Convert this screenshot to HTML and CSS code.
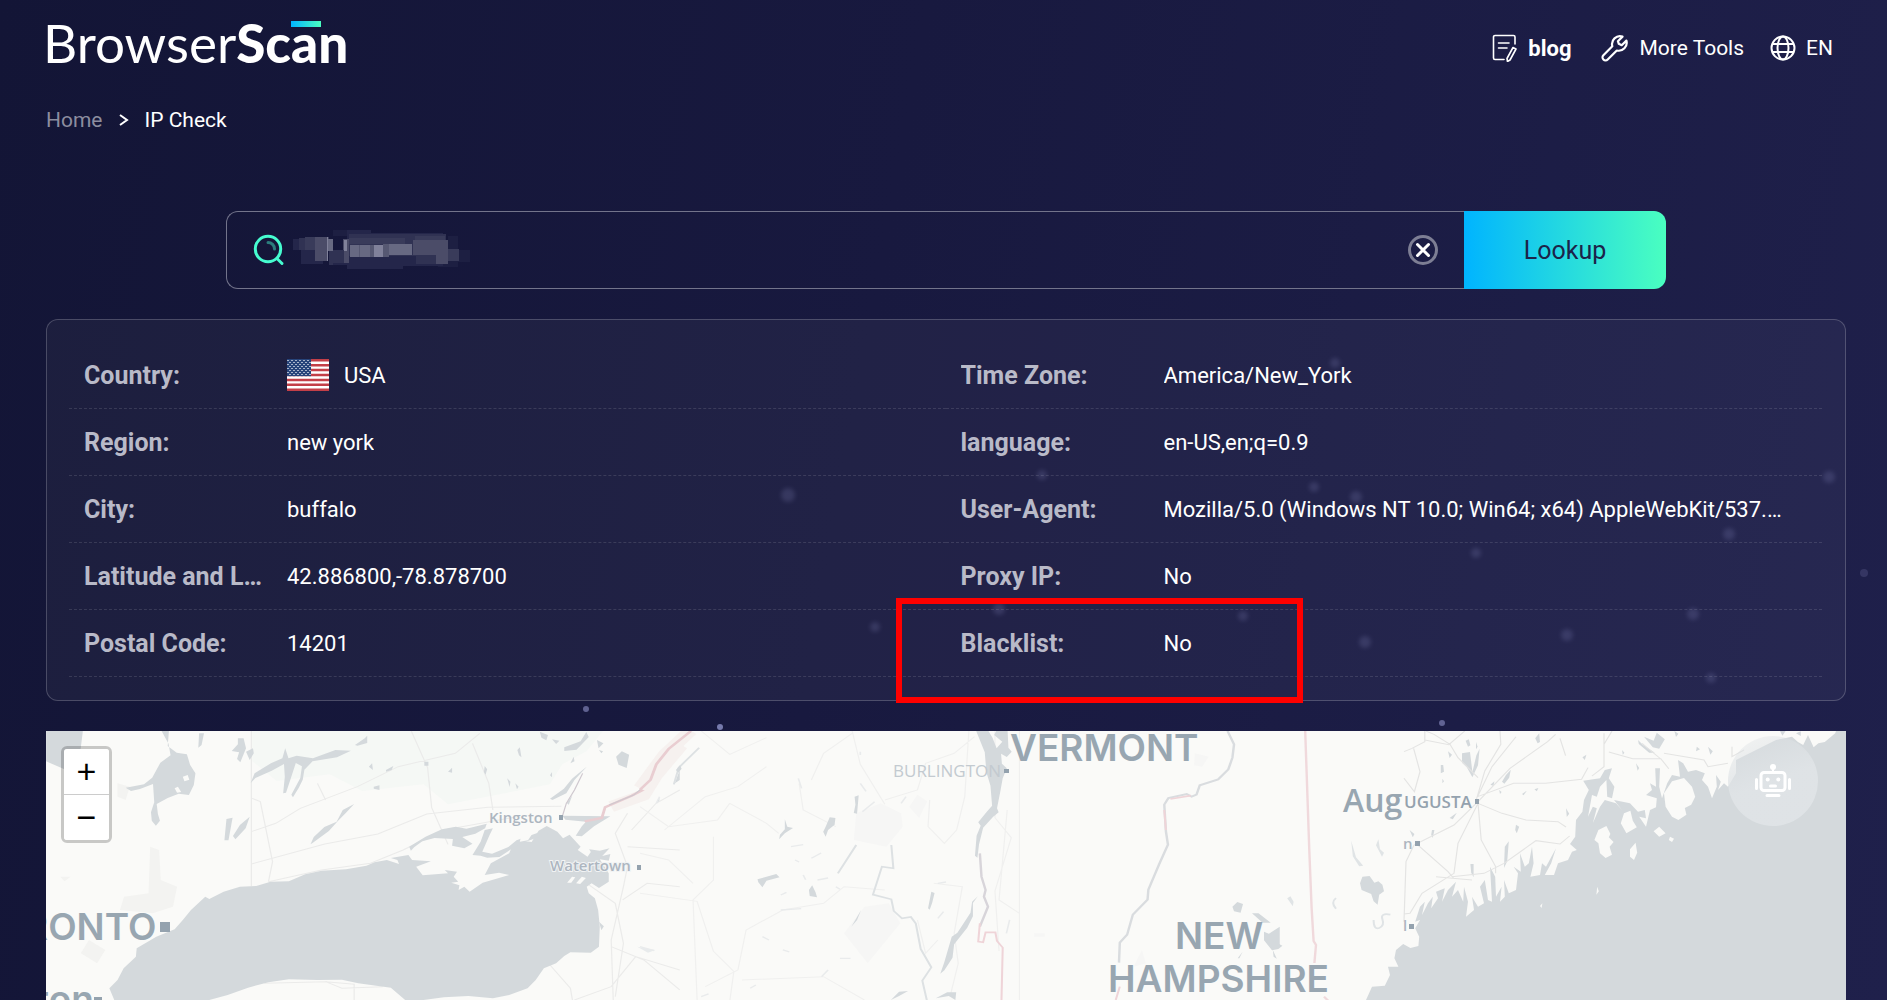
FILE: index.html
```
<!DOCTYPE html>
<html lang="en">

<head>
    <meta charset="UTF-8">
    <meta name="viewport" content="width=device-width, initial-scale=1.0">
    <title>IP Check - BrowserScan</title>
    <link rel="stylesheet" href="styles.css">
</head>

<body>
    <!-- background particles -->
    <svg class="particles" aria-hidden="true">
        <g fill="#8f92c8">
            <circle cx="586" cy="709" r="3" opacity=".6" />
            <circle cx="720" cy="727" r="3" opacity=".8" />
            <circle cx="1442" cy="723" r="3" opacity=".6" />
            <circle cx="1864" cy="573" r="4" opacity=".2" />
        </g>
        <g class="dim" fill="#8f92c8" opacity=".2">
            <circle cx="788" cy="495" r="7" />
            <circle cx="1335" cy="363" r="5" />
            <circle cx="1042" cy="475" r="5" />
            <circle cx="1314" cy="487" r="5" />
            <circle cx="1356" cy="497" r="6" />
            <circle cx="1729" cy="534" r="6" />
            <circle cx="1476" cy="553" r="5" />
            <circle cx="1829" cy="477" r="6" />
            <circle cx="875" cy="627" r="5" />
            <circle cx="999" cy="609" r="6" />
            <circle cx="1243" cy="616" r="5" />
            <circle cx="1365" cy="642" r="6" />
            <circle cx="1567" cy="635" r="6" />
            <circle cx="1693" cy="614" r="6" />
            <circle cx="1711" cy="678" r="5" />
        </g>
    </svg>

    <header class="header">
        <a class="logo" href="#">Browser<b>Sc<span class="logo-a">a</span>n</b></a>
        <nav class="nav">
            <a class="nav-item nav-blog" href="#">
                <svg width="26" height="28" viewBox="0 0 26 28" fill="none" stroke="#fff" stroke-width="1.6" stroke-linecap="round" stroke-linejoin="round">
                    <path d="M23 10V3a1.500 1.500 0 0 0-1.500-1.500H3A1.500 1.500 0 0 0 1.500 3v21A1.500 1.500 0 0 0 3 25.500h9M6.500 9H17M6.500 14H15" />
                    <path d="M21 13.500l3 1.500-6 11-2.500 1.500-.5-3z" />
                </svg>
                <b>blog</b>
            </a>
            <a class="nav-item nav-tools" href="#">
                <svg width="28" height="28" viewBox="0 0 28 28" fill="none" stroke="#fff" stroke-width="2.200" stroke-linejoin="round">
                    <path d="M21.500 2.600A8 8 0 0 0 11.300 12.300L2.400 21.200a3 3 0 0 0 4.300 4.300L15.800 16.500A8 8 0 0 0 25.400 6.600L20.700 11.200 17.800 9.800 16.900 7.200z" />
                </svg>
                <span>More Tools</span>
            </a>
            <a class="nav-item" href="#">
                <svg width="26" height="26" viewBox="0 0 26 26" fill="none" stroke="#fff" stroke-width="2">
                    <circle cx="13" cy="13" r="11.500" />
                    <ellipse cx="13" cy="13" rx="5.500" ry="11.500" />
                    <path d="M2.500 9h21M2.500 17h21" />
                </svg>
                <span>EN</span>
            </a>
        </nav>
    </header>

    <main class="main">
        <nav class="crumbs">
            <a href="#">Home</a>
            <svg width="10" height="12" viewBox="0 0 10 12" fill="none" stroke="#fff" stroke-width="2"><path d="M1 1l7 5-7 5" /></svg>
            <span>IP Check</span>
        </nav>

        <form class="search">
            <div class="search-field">
                <svg width="32" height="32" viewBox="0 0 32 32" fill="none" stroke="#46fcd0" stroke-width="3" stroke-linecap="round">
                    <circle cx="15" cy="15" r="12.700" />
                    <path d="M24.500 25l4.500 4.500" />
                    <path d="M15 8.500a6.500 6.500 0 0 1 6.500 6.500" opacity=".45" />
                </svg>
                <!-- hidden address -->
                <svg class="mask" width="180" height="40" viewBox="0 0 180 40" shape-rendering="crispEdges" aria-hidden="true">
                    <path fill="#1d1f42" d="M40 0h16v6H40zM155 6h10v14h12v12h-12v5h-20v-6h10z" />
                    <path fill="#24264a" d="M0 9h30v25H8V20H0zM54 0h24v3h72v33h-40v3H54v-4H38V20h16z" />
                    <path fill="#303253" d="M6 8h16v12H6zM36 20h20v13H40v2h-4zM56 4h97v30h-30v-8H56z" />
                    <path fill="#393b5a" d="M12 7h24v13H12zM56 8h56v6H56zM122 6h30v14h-30zM166 19h-14v12h14z" />
                    <path fill="#4b4c68" d="M22 7h13v24H22zM50 9h6v24h-5V20h-1zM120 10h35v15h-35zM143 20h12v14h-12z" />
                    <path fill="#676982" d="M57 15h20v12H57zM96 14h23v11H96zM35 9h5v12h-5z" />
                    <path fill="#80819a" d="M81 15h9v12h-9zM34 7h1v24h-1zM51 10h3v11h-3z" />
                    <path fill="#565872" d="M77 15h4v12h-4zM90 14h6v13h-6zM66 15h1v12h-1z" />
                </svg>
                <input class="search-input" type="text" aria-label="IP address">
                <button class="clear" type="reset" aria-label="Clear">
                    <svg width="30" height="30" viewBox="0 0 30 30" fill="none">
                        <circle cx="15" cy="15" r="13.500" stroke="#7d7e94" stroke-width="3" />
                        <path d="M9.500 9.500l11 11M20.500 9.500l-11 11" stroke="#fff" stroke-width="3" stroke-linecap="round" />
                    </svg>
                </button>
            </div>
            <button class="lookup" type="submit">Lookup</button>
        </form>

        <dl class="info">
            <div class="info-item">
                <dt>Country:</dt>
                <dd class="country">
                    <svg width="42" height="32" viewBox="0 0 42 32">
                        <defs>
                            <pattern id="stars" width="4" height="4" patternUnits="userSpaceOnUse">
                                <rect width="4" height="4" fill="#27447a" />
                                <path d="M0 1h2v1H0zM2 3h2v1H2z" fill="#a9b5cb" />
                            </pattern>
                        </defs>
                        <path fill="#fff" d="M0 0h42v32H0z" />
                        <path stroke="#c33f48" stroke-width="2.460" d="M0 1.230h42M0 6.150h42M0 11.080h42M0 16h42M0 20.920h42M0 25.850h42M0 30.770h42" />
                        <path fill="url(#stars)" d="M0 0h24v17.200H0z" />
                    </svg>
                    <span>USA</span>
                </dd>
            </div>
            <div class="info-item">
                <dt>Time Zone:</dt>
                <dd>America/New_York</dd>
            </div>
            <div class="info-item">
                <dt>Region:</dt>
                <dd>new york</dd>
            </div>
            <div class="info-item">
                <dt>language:</dt>
                <dd>en-US,en;q=0.9</dd>
            </div>
            <div class="info-item">
                <dt>City:</dt>
                <dd>buffalo</dd>
            </div>
            <div class="info-item">
                <dt>User-Agent:</dt>
                <dd>Mozilla/5.0 (Windows NT 10.0; Win64; x64) AppleWebKit/537.36 (KHTML, like Gecko)</dd>
            </div>
            <div class="info-item">
                <dt>Latitude and Longitude:</dt>
                <dd>42.886800,-78.878700</dd>
            </div>
            <div class="info-item">
                <dt>Proxy IP:</dt>
                <dd>No</dd>
            </div>
            <div class="info-item">
                <dt>Postal Code:</dt>
                <dd>14201</dd>
            </div>
            <div class="info-item marked">
                <dt>Blacklist:</dt>
                <dd>No</dd>
            </div>
        </dl>

        <section class="map" aria-label="Map">
            <svg class="map-canvas" viewBox="0 0 1800 269" preserveAspectRatio="xMidYMin slice">
                <!-- Lake Ontario side -->
                <g transform="translate(-6 -11) scale(.408 .3333)">
                    <path fill="#f5f8f5" d="M520 33h860l-40 60-60 40-30 60-250 60-60-60-150 20-80-50-130 20-60-60z" />
                    <g fill="#f3f3f1">
                        <path d="M270 380l22 10 4 90 40 20-10 60-50 20-80-10 10-40 60-10zM120 660l40 30-20 40-40-30z" />
                        <path d="M190 190l30 10-10 40-20-10zM50 470h25l-15 14z" />
                    </g>
                    <g fill="none" stroke="#ebebea" stroke-width="3">
                        <path d="M518 33v465M518 432l180-60 130-30 120-60 150-20 180-3M518 335l60-25 60-45 140-65 100-60 140-40 60-60M910 33l40 110 10 120 40 110M1060 70l40 120 10 80M520 235l20 10 30 180-10 60M680 190l20 50M560 485l130-35 120-20 80-40 100-60 180-40M1440 280l-30 60 30 100-10 60-30 160 5 180M1440 380l128 10M1340 490l70 60 20 120-20 160M1400 680l80 40 88 90M1250 735l50 70 5 35M1310 840l90-40 60-90 108 40M1450 330l60-80 58-40M1568 500l-80-10-60 50" />
                        <path d="M550 790l150-5 70 8v47M700 785l40 20 100-5" />
                    </g>
                    <g fill="#d4d9dc">
                        <path d="M15 33h90l-5 50-5 35-35 30-45-24z" />
                        <path d="M298 33h18l-3 45 22 20 25 5 8 32 13 25-4 35-12 30-25-4-27 13-27 18 3 30 5 20-10 15-10-15-2-25 8-30-3-55-32 15-22 6-13-10 45-10 20-20 20-45 25-22-5-35z" />
                        <path d="M485 55l14 0 6 30-14 42-8-10 5-20-18-4 15-20zM505 95l17-10 2 15-10 20zM390 40l12 0-6 35-8 8zM457 297l15-4-10 68-10 0zM490 315l24-25-10 35-25 33-6-10z" />
                        <path d="M516 190l10-30 40-30 28-15 7-30 8 30 20-8 40 8 55-25 38 2-34 20-60 12-20 25-4 30-10 25-14 28-4-8 22-50 4-35-15-10-12 45-12 44-7 2 4-50-2-38-30 20-40 22z" />
                        <path d="M663 373l8-22 26-30 30-16 15-35 28-18-20 26-20 25-22 30-40 36z" />
                        <path d="M772 75l24-20 6-8 0 22-24 8zM806 140l8-10 2 20zM848 150l18-12-4 12-14 5zM942 125h10v12h-10zM1000 155l10-12v15zM1090 138l6 10-4 16-4-8zM1170 90l6-8 4 30-6-6zM1145 175l8 10-2 16zM1165 190l8 10-4 8zM818 200l14-4v14l-14-4z" />
                        <path d="M1225 35l20 10-4 16-12-8zM1255 58l18 4-8 10zM1285 82l40-18 14-28 6 15-30 38-30 4zM1365 60l16 10-12 15zM1412 110l14-16 18 10-6 40-20-10zM1370 90l10 4-4 6zM1300 130l8-20 2 14zM1330 150l10-10-30 40-20 40-34 20-6-4 34-30 20-30zM1305 225l-14 24 5 5zM1250 166l5-10v16zM1556 190l12-40v30zM1510 250l8-18v10z" />
                        <!-- lake -->
                        <path d="M170 805L190 780 205 745 235 710 237 685 285 650 330 628 350 600 370 570 405 530 415 537 450 515 490 500 530 498 565 485 610 484 650 463 690 452 750 448 800 437 820 427 850 420 880 432 876 420 860 414 903 405 912 420 958 424 922 440 938 466 1000 460 992 450 1022 455 1014 470 1025 485 1008 488 1028 496 1026 510 1040 500 1053 515 1085 488 1150 465 1125 458 1090 465 1105 430 1150 400 1158 376 1180 362 1205 366 1222 332 1242 318 1268 335 1282 355 1298 344 1325 380 1318 390 1342 410 1350 396 1346 388 1372 392 1396 385 1378 408 1398 402 1394 422 1372 418 1394 460 1394 485 1370 504 1352 490 1340 500 1345 520 1360 535 1368 570 1372 620 1370 680 1350 698 1300 697 1285 708 1265 730 1235 745 1215 780 1195 805 1150 825 1110 835 1050 828 990 832 940 840 895 840 860 803 780 790 740 779 680 780 610 778 560 787 510 803 460 825 415 840 182 840z" />
                        <path d="M905 380l40-30 40-22 34-8 26 6 50-15-4 14-24 16-32 10 25 20-20 14-30-8 2-20-45-3-30 10-20 18-8 10zM1060 405l20-40 10-35 20-5-8 20-18 50 24 6 40-20 20-20 70-30 8 10-70 30-50 40-30 2-16-6zM1280 287l118 2-40 30-30 30-15-2 15-28 10-14-50-6zM1370 605l12 14-6 12z" />
                    </g>
                    <path fill="#fafaf8" d="M350 170l12-5 4 14-12 5zM330 205l8-5 8 16-10 2zM1292 488l12-18 8 2-10 16zM1314 490l14-20 10 4-14 18zM1180 345l30-10-14 26-20 4z" />
                    <path fill="none" stroke="#f6f1ef" stroke-width="34" d="M1400 260l80-35 30-60 62-90" />
                    <path fill="none" stroke="#e9cdd1" stroke-width="7" d="M1335 304l42-10 8-32 65-35 35-22 24-50 63-90" />
                    <path fill="none" stroke="#cfc8cf" stroke-width="3" d="M1395 255l60-30 40-40 73-125M1280 290l10-40 20-40 20-50" />
                    <path fill="#e8ebec" d="M1464 680l44 10-18 8z" />
                </g>
                <!-- New York, Vermont, New Hampshire -->
                <g transform="translate(594 -11) scale(.408 .3333)">
                    <path fill="#f6f6f5" d="M530 280l60-30 50 30 4 40-40 60-80-20zM500 640l50-80 60-10 28 60-80 120zM660 260l20-36 24 20-20 50zM1360 100l34 10-16 30-20-4zM1210 740l20-50 10 40zM966 640h26v10h-26z" />
                    <path fill="none" stroke="#f0f0ef" stroke-width="3" d="M150 33l70 70 90-50M0 260l70 60 120-20 30-50M220 250l90 60 30 30M60 330l100-100 80-30 70-60M390 190l10 80 80 50M180 350v130l-50 60 10 300M0 520l140 24 40 150 50 60-10 90M160 800l80-50 20-120 90-60 100-20 50-50 100 10M420 180l30-80 70-60M520 33l20 100 60 120M600 240l80-30 20-80 70-30 50-50M710 240l-4 80 40 50 30-40 20-100 10-197M720 490l70 10-20 140 10 90-20 100M680 600l20 100 30-40M870 33v260l40 60-40 160 10 180M900 270l-20 270 50 40M0 400l70 20 60 70M250 780l200-10 100 70M930 33v807" />
                    <path fill="none" stroke="#f6f1ef" stroke-width="34" d="M0 205l30-50 30-50 65-74" />
                    <path fill="none" stroke="#e9cdd1" stroke-width="7" d="M0 209l26-30 14-46 30-46 55-54" />
                    <path fill="none" stroke="#dde1e3" stroke-width="5" d="M145 83l-50 60-12 50M530 375l-45 85M616 375l5 70-28-5-22 84 45 14 6 35 20 22 22-4 12 20 12 76 26 55-22 40 12 64" />
                    <path fill="none" stroke="#d9dcdf" stroke-width="6" d="M1440 33l16 40-4 40-10 35-25 30-45 18-8 28-12 6-12-8-45 12-10 20 4 80 5 40-22 60-26 75-2 30-36 45-14 60-18 24-2 60" />
                    <path fill="none" stroke="#d8d5da" stroke-width="6" d="M833 400l4 70 10 40-4 20 10 30-20 60" />
                    <path fill="none" stroke="#efd4d8" stroke-width="5" d="M833 610l-4 55 12 2 6-30 24 0 4 26 14 20-3 157M1285 270l4 60M1300 237l50-10M1166 840l10-40" />
                    <g fill="#d4d9dc">
                        <path d="M824 33h30l10 20 10 32 14-20-20-20 5-12h28l2 50 8 12-12 16-14-10 2 30 12 14-10 30-6 40-8 50 4 12-14 14-24 32-10 50-4 40-6-6 4-60 10-30-6-10 20-30 14-20-4-60-10-40-4-60z" />
                        <path d="M526 230l10-4-4 55-8-2 4-25zM355 298l6 22 14 4-20 16-14 18 2-14 12-16zM455 320l10-28 14 2-2 20-16 16-6 20-6-15zM288 478l46-16 8 10-32 10-10 20-10-15zM414 510l8-14 8 20 4 16-18-4zM88 150l10-14 4 10-8 12zM542 570l-10 30-14 20zM714 515l8 4-6 30-6 20-4-4zM814 545l14-16-12 20 0 40-14 34-32 50-4 40-20 38-10 10 10-35 18-76 14-12 32-60zM615 840l20-25 22-2-22 15zM725 835l28-18 22 0-2 23-16-12z" />
                        <path d="M1452 560l12-14 14 6-6 26-16-4zM1500 580l16 0 30 28-20 0zM1530 650l38-30v60l-26-10zM1465 715l12-20-8 20z" />
                    </g>
                    <g fill="none" stroke="#e9ebec" stroke-width="4">
                        <path d="M388 175l8 30M540 190l14 24M540 105v-10M640 250l12-20M545 275l30-30M370 380l30-6M420 415l24-16M380 420l10 6M345 525l14-8M400 465l6 14M435 480l26-6M480 500l10 8M730 595l14-20M345 570l50-4M350 690l16 6M300 650l16 10M445 770l16-20M490 715l26 0M270 805l14-10M150 830l18-8M730 490l20-4M898 640l8-40M0 680l35 12M40 250l8-20" />
                    </g>
                </g>
                <!-- Maine coast -->
                <g transform="translate(1214 -11) scale(.4 .3333)">
                    <path fill="none" stroke="#f0d9dc" stroke-width="6" d="M113 33l10 350 6 180 5 100 6 12-4 54M160 830l12 14" />
                    <g fill="#e0e4e6">
                        <path d="M228 362l12 50 18 25-10 2-16-30zM290 376l6-18 4 30 10 10-5 12zM68 535l8-6 8 16-2 14z" />
                    </g>
                    <path fill="none" stroke="#e0e4e6" stroke-width="5" d="M190 534q-14 14 0 32M284 600q0 30 14 24t8-26 20-14" />
                    <path fill="#d4d9dc" d="M256 470l18-2 12 20 10-4 10 10 4 20-12 10-4 30-10-10-6-22-24-12-4-20zM10 635l12 6 8 20 26 16-10 10-16 4-20-30zM32 690l10 26-8-6z" />
                    <!-- sea -->
                    <path fill="#d4d9dc" d="M265 840L280 800 312 797 325 765 320 740 346 740 336 715 340 690 358 672 376 684 396 678 398 650 388 625 400 600 388 605 400 560 412 545 405 585 420 550 432 530 428 565 445 535 440 515 462 505 455 545 470 510 490 485 480 530 495 510 508 545 510 500 520 545 515 590 535 570 530 530 545 560 560 550 550 500 562 480 570 540 580 545 575 440 588 470 590 530 604 500 600 545 612 530 610 480 622 520 640 510 645 460 634 440 652 455 650 400 662 440 672 430 680 380 684 430 676 470 700 465 705 430 715 440 740 385 728 430 712 465 735 465 745 430 770 420 780 395 792 390 775 372 788 350 790 300 806 275 810 240 822 210 808 182 850 175 862 150 880 145 872 175 886 200 880 235 868 230 866 180 850 200 842 230 830 225 820 290 832 260 842 265 832 310 850 260 862 240 890 250 905 270 885 240 925 250 945 275 962 270 965 295 948 290 965 320 975 270 990 262 992 235 965 225 980 210 975 190 990 200 988 145 1000 145 998 200 1005 235 1018 190 1030 165 1050 170 1045 120 1058 130 1070 155 1090 150 1112 160 1105 180 1120 200 1130 235 1142 200 1140 165 1152 185 1145 210 1160 190 1170 200 1190 160 1190 120 1240 90 1290 60 1330 50 1345 66 1358 75 1370 45 1384 82 1396 70 1412 66 1438 40 1440 33 1466 33 1466 840z" />
                    <g fill="#fafaf8">
                        <path d="M1010 220l20-36 30-10 20 26 8 30-10 24-16 10 4 20-20 16-16-10-16-30zM910 280l16-8 6 30 10 20-26 18-14-30zM846 330l20-12 10 24-4 10 12 14-10 14 6 24-16 10-14-14-4-30-10-10zM925 388l14-20 4 30-8 22-10-10zM984 334l14-14 16 20-16 10zM1025 350l10 6-5 10-8-6zM843 500l4 14-6 10zM700 558l6-8-2 14z" />
                    </g>
                    <g fill="#d4d9dc">
                        <path d="M514 62l8-4 4 18-6 4zM505 100l20-4 6 60 10-50 8-20-4 50-14 36-14-30-12-14zM540 66l4 14-4 8zM452 135l6 0 2 20-8 5zM456 176l4 8-4 6zM470 94l10 10-6 10zM688 55l10-15 2 26-6 4zM806 112l10-8-4 16zM605 185l10-20 12-16-4 24-12 18zM576 194l10-10-2 14zM655 222l12-10-8 14zM686 208l10-4-4 10zM765 265l8 16-6 10zM640 314l8 6-6 20-4-10zM474 294l18-16-10 20zM430 330l6 0-4 24-4-10zM374 330l12 12-4 10zM945 60l12 14 30 24-14 0-26-26zM960 50l24 12 8-24 20 20-14 28-16-4zM1036 33l10 8-6 10zM1120 80l12 14-6 10zM1092 80l8 8-10 6zM905 90l6 8-4 6zM940 130l8 14-4 8zM598 210l6 6-4 6zM526 432l8 0 0 40-6-14zM612 380l10-16-4 60-8 20zM1340 40l12-6 0 14zM1300 33l14 0-8 14z" />
                    </g>
                    <g fill="none" stroke="#e4e4e3" stroke-width="3">
                        <path d="M360 95l20-10 32-20v-32M412 60l60 14 40-41M384 85l16 70-14 60-26-40M415 33l20 10 40 30 20 40 50 60M600 33l2 40-40 80-22 90M640 50l-60 90-36 90 90-40 80 0 90-12 16-35M545 245l80-100 94-80 20-22M545 245l-60 70-100 60-20 50-5 180M545 250l60 30 60 20 80 5 20 16M545 250l8 110 36 80 0 20M545 250l-50 120-10 90-80 60-30 60-15 2M390 370l80 85 14 20M480 470l80-10 50-30 80-68 60 10 24-24M440 470l90 10M860 40l0 100-30 28M872 96l60 20 70 0 20 30M955 70l50 50M750 55l14 52M1180 80l0 30 30-20M880 33l-20 40M1010 100l100 20 10 20 50-10" />
                    </g>
                </g>
                <g class="map-towns">
                    <text x="443" y="92">Kingston</text>
                    <text x="504" y="140" class="halo">Watertown</text>
                    <text x="847" y="46" class="faint">BURLINGTON</text>
                    <text x="1358" y="77" class="augusta">UGUSTA</text>
                    <text x="1357" y="118">n</text>
                    <text x="1357" y="200">l</text>
                </g>
                <g class="map-states">
                    <text x="-22" y="209">RONTO</text>
                    <text x="-10" y="281">ton</text>
                    <text x="964" y="30">VERMONT</text>
                    <text x="1297" y="81" class="aug">Aug</text>
                    <text x="1129" y="218">NEW</text>
                    <text x="1062" y="261">HAMPSHIRE</text>
                </g>
                <path fill="#94a2ae" d="M114 191h10v10h-10zM48 266h8v3h-8zM513 84h4v5h-4zM591 134h4v5h-4zM958 38h5v4h-5zM1429 68h4v5h-4zM1369 110h5v5h-5zM1363 193h5v5h-5z" />
            </svg>
            <div class="zoom">
                <button type="button" aria-label="Zoom in">+</button>
                <button type="button" aria-label="Zoom out">&minus;</button>
            </div>
            <button class="bot" type="button" aria-label="Chat">
                <svg width="36" height="34" viewBox="0 0 36 34" fill="none" stroke="#fff" stroke-linecap="round">
                    <circle cx="18" cy="3" r="3" fill="#fff" stroke="none" />
                    <path stroke-width="2" d="M18 4v5" />
                    <rect x="6" y="8.500" width="24" height="18" rx="3" stroke-width="3" />
                    <circle cx="12.700" cy="15.500" r="2" fill="#fff" stroke="none" />
                    <circle cx="23.300" cy="15.500" r="2" fill="#fff" stroke="none" />
                    <path stroke-width="3" d="M15.500 22h5M12 31.500h12M1.500 15.500v9M34.500 15.500v9" />
                </svg>
            </button>
        </section>
    </main>
</body>

</html>
```

FILE: styles.css
```
* {
    box-sizing: border-box;
}

body {
    margin: 0;
    min-height: 100vh;
    padding: 0 41px 0 46px;
    display: flex;
    flex-direction: column;
    position: relative;
    background: linear-gradient(100deg, #131536 0%, #18193f 45%, #1f204b 100%);
    color: #fff;
    font-family: Roboto, "Liberation Sans", sans-serif;
    font-size: 21px;
}

a {
    color: inherit;
    text-decoration: none;
}

button {
    font-family: inherit;
    border: none;
    padding: 0;
    cursor: pointer;
}

svg {
    flex-shrink: 0;
}

.particles {
    position: absolute;
    inset: 0;
    width: 100%;
    height: 100%;
    pointer-events: none;
}

.particles .dim {
    filter: blur(2px);
}

/* header */
.header {
    height: 96px;
    display: flex;
    align-items: center;
    justify-content: space-between;
    padding-right: 13px;
}

.logo {
    font-family: Lato, sans-serif;
    font-size: 53px;
    line-height: 60px;
    padding-bottom: 10px;
    margin-left: -3px;
}

.logo b {
    font-weight: 900;
}

.logo-a {
    position: relative;
}

.logo-a::before {
    content: "";
    position: absolute;
    left: 0;
    top: 10px;
    width: 30px;
    height: 6px;
    background: linear-gradient(90deg, #00b4ff, #4affc0);
}

.nav {
    display: flex;
    align-items: center;
    gap: 26px;
}

.nav-item {
    display: flex;
    align-items: center;
    gap: 10px;
}

.nav-blog {
    margin-right: 4px;
}

.nav-blog b {
    font-size: 22px;
}

/* breadcrumb */
.main {
    flex: 1;
    display: flex;
    flex-direction: column;
}

.crumbs {
    display: flex;
    align-items: center;
    gap: 16px;
    height: 48px;
}

.crumbs a {
    color: #8c8d9f;
}

/* search */
.search {
    width: 80%;
    height: 78px;
    margin: 67px auto 30px;
    display: flex;
}

.search-field {
    flex: 1;
    display: flex;
    align-items: center;
    padding: 0 26px;
    border: 1px solid #73748b;
    border-right: none;
    border-radius: 12px 0 0 12px;
}

.mask {
    margin-left: 8px;
}

.search-input {
    flex: 1;
    min-width: 0;
    height: 100%;
    border: none;
    outline: none;
    background: transparent;
    color: #fff;
    font: inherit;
}

.clear {
    display: flex;
    background: transparent;
}

.lookup {
    width: 202px;
    border-radius: 0 12px 12px 0;
    background: linear-gradient(90deg, #00b4ff, #4affc0);
    color: #1c2349;
    font-size: 25px;
}

/* ip info */
.info {
    margin: 0 0 30px;
    padding: 22px 23px 23px 22px;
    display: grid;
    grid-template-columns: 1fr 1fr;
    border: 1px solid rgba(255, 255, 255, .2);
    border-radius: 12px;
    background: rgba(255, 255, 255, .04);
}

.info-item {
    position: relative;
    display: flex;
    align-items: center;
    min-width: 0;
    height: 67px;
    padding: 0 40px 0 15px;
    border-bottom: 1px dashed rgba(255, 255, 255, .12);
}

.info-item dt {
    width: 178px;
    margin-right: 25px;
    flex-shrink: 0;
    color: #b9bac8;
    font-size: 25px;
    font-weight: 700;
}

.info-item dd {
    margin: 0;
    font-size: 22px;
}

.info-item dt,
.info-item dd {
    overflow: hidden;
    white-space: nowrap;
    text-overflow: ellipsis;
}

.info-item .country {
    display: flex;
    align-items: center;
    gap: 15px;
}

/* red frame round the blacklist row */
.marked::after {
    content: "";
    position: absolute;
    left: -50px;
    top: -12px;
    bottom: -27px;
    width: 395px;
    border: 6px solid #f00;
}

/* map */
.map {
    position: relative;
    flex: 1;
    min-height: 269px;
    overflow: hidden;
    background: #fafaf8;
}

.map-canvas {
    position: absolute;
    width: 100%;
    height: 100%;
}

.map-towns {
    font-family: "Open Sans", sans-serif;
    font-size: 15px;
    font-weight: 600;
    fill: #adb6c0;
}

.map-towns .halo {
    stroke: #f1f3f4;
    stroke-width: 2px;
    paint-order: stroke;
}

.map-towns .faint {
    font-size: 17px;
    font-weight: 400;
    fill: #c3cad0;
}

.map-towns .augusta {
    font-size: 17px;
    fill: #94a2ae;
}

.map-states {
    font-family: Inter, sans-serif;
    font-size: 37px;
    font-weight: 600;
    fill: #98a6b1;
}

.map-states .aug {
    font-family: "Open Sans", sans-serif;
    font-size: 32px;
}

.zoom {
    position: absolute;
    left: 15px;
    top: 15px;
    display: flex;
    flex-direction: column;
    border: 3px solid rgba(0, 0, 0, .2);
    border-radius: 6px;
    background-clip: padding-box;
}

.zoom button {
    width: 45px;
    height: 45px;
    background: #fff;
    color: #000;
    font: 400 34px/45px "Liberation Sans", sans-serif;
}

.zoom button:first-child {
    height: 46px;
    border-bottom: 1px solid #ccc;
    border-radius: 3px 3px 0 0;
}

.zoom button:last-child {
    border-radius: 0 0 3px 3px;
}

.bot {
    position: absolute;
    right: 28px;
    top: 5px;
    width: 90px;
    height: 90px;
    display: flex;
    align-items: center;
    justify-content: center;
    border-radius: 50%;
    background: linear-gradient(160deg, rgba(212, 217, 220, .2), rgba(224, 228, 231, .9) 50%);
}
```
